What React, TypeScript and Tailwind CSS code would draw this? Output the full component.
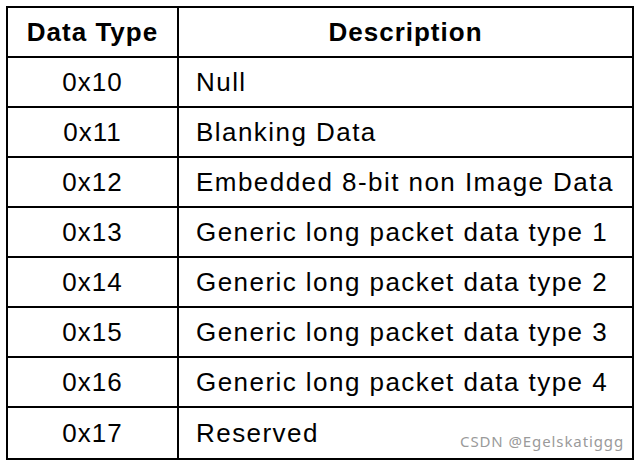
const rows: [string, string][] = [
  ["0x10", "Null"],
  ["0x11", "Blanking Data"],
  ["0x12", "Embedded 8-bit non Image Data"],
  ["0x13", "Generic long packet data type 1"],
  ["0x14", "Generic long packet data type 2"],
  ["0x15", "Generic long packet data type 3"],
  ["0x16", "Generic long packet data type 4"],
  ["0x17", "Reserved"],
];

export default function App() {
  return (
    <div className="relative h-[461px] w-[635px] bg-white p-[6px] font-[family-name:Liberation_Sans,Arial,sans-serif] text-black">
      <div className="w-[628px] border-2 border-black">
        <div className="grid h-[50px] grid-cols-[171px_1fr] border-b-2 border-black text-[26px] font-bold tracking-[1px]">
          <div className="flex items-center justify-center border-r-2 border-black">Data Type</div>
          <div className="flex items-center justify-center">Description</div>
        </div>
        {rows.map(([code, desc], i) => (
          <div
            key={code}
            className={
              "grid h-[50px] grid-cols-[171px_1fr] text-[26px] tracking-[1.45px] " +
              (i < rows.length - 1 ? "border-b-2 border-black" : "h-[48px]")
            }
          >
            <div className="flex items-center justify-center border-r-2 border-black tracking-[1px]">{code}</div>
            <div className="flex items-center pl-[17px]">{desc}</div>
          </div>
        ))}
      </div>
      <span className="absolute left-[460px] top-[430px] font-[family-name:Noto_Sans,sans-serif] text-[15px] tracking-[0.9px] text-[#9a9a9a]">
        CSDN @Egelskatiggg
      </span>
    </div>
  );
}
